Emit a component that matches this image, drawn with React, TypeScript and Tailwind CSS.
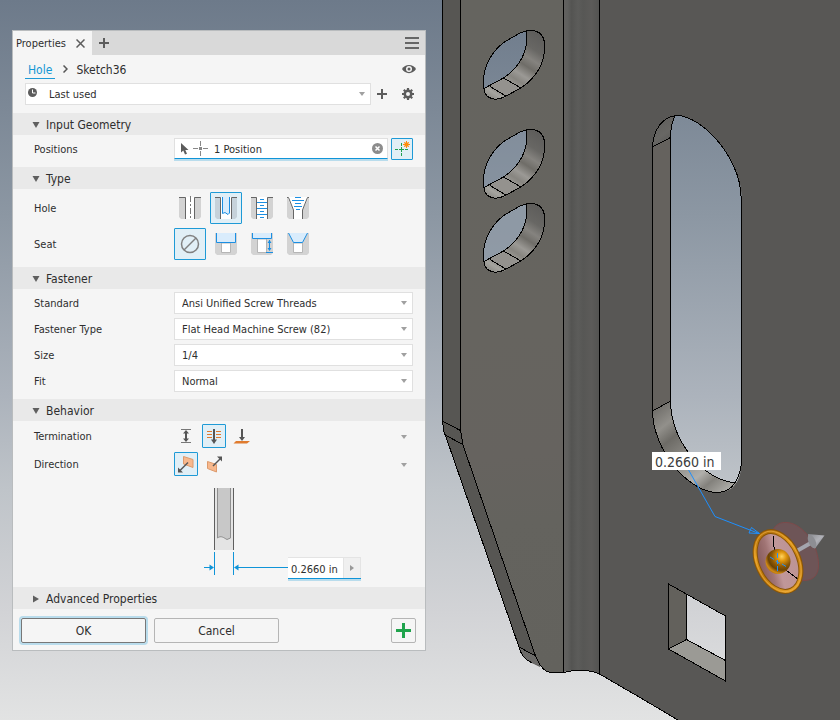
import { useState } from "react";
import type { ReactNode } from "react";

const holeSky = "M526.5 31C529 50 520 67 503.5 78L484 88.5L483.5 78C485 62 495 48 506 41L520 33Z";
const holeOutline =
  "M526.5 31C536 29 544.5 33 544.5 45V51C543 67 534 79 521 88L506 96C496 102 485 99 484 89L483.5 78C485 62 495 48 506 41L520 33Z";
const slotOutline =
  "M652.5 147C653 130 663 116 677 115.5C702 116 740 157 741 196L741.5 202V460C741 476 734 492.5 717 492.5C688 492 653 450 652.5 411Z";

const Scene = () => (
  <svg
    className="absolute inset-0 h-full w-full"
    viewBox="0 0 840 720"
    preserveAspectRatio="xMinYMin slice"
    fill="none"
    aria-label="Part model"
  >
    <defs>
      <linearGradient id="sky" gradientUnits="userSpaceOnUse" x1="0" y1="0" x2="0" y2="720">
        <stop offset="0" stopColor="#6d7a8a" />
        <stop offset="0.3" stopColor="#8c97a3" />
        <stop offset="0.55" stopColor="#acb3bc" />
        <stop offset="0.68" stopColor="#bfc4c9" />
        <stop offset="0.85" stopColor="#d2d3d6" />
        <stop offset="1" stopColor="#e2e3e3" />
      </linearGradient>
      <linearGradient id="face" gradientUnits="userSpaceOnUse" x1="460" y1="0" x2="520" y2="672">
        <stop offset="0" stopColor="#65645f" />
        <stop offset="0.5" stopColor="#66645f" />
        <stop offset="0.68" stopColor="#66635f" />
        <stop offset="0.78" stopColor="#64635e" />
        <stop offset="1" stopColor="#63625d" />
      </linearGradient>
      <linearGradient id="bend" x1="0" x2="1" y1="0" y2="0">
        <stop offset="0" stopColor="#636260" />
        <stop offset="0.12" stopColor="#5f5f5d" />
        <stop offset="0.22" stopColor="#545452" />
        <stop offset="0.4" stopColor="#5c5c5a" />
        <stop offset="0.55" stopColor="#575755" />
        <stop offset="0.78" stopColor="#5c5b59" />
        <stop offset="1" stopColor="#535351" />
      </linearGradient>
      <linearGradient id="bore" gradientUnits="userSpaceOnUse" x1="538" y1="34" x2="500" y2="92">
        <stop offset="0" stopColor="#5e5d5b" />
        <stop offset="0.22" stopColor="#686764" />
        <stop offset="0.36" stopColor="#85837f" />
        <stop offset="0.48" stopColor="#6f6d68" />
        <stop offset="0.62" stopColor="#9b9995" />
        <stop offset="0.72" stopColor="#878580" />
        <stop offset="0.82" stopColor="#9b9994" />
        <stop offset="1" stopColor="#94928e" />
      </linearGradient>
      <linearGradient id="boreEnd" gradientUnits="userSpaceOnUse" x1="498" y1="86" x2="490" y2="99">
        <stop offset="0" stopColor="#7a7974" />
        <stop offset="0.5" stopColor="#a6a5a0" />
        <stop offset="1" stopColor="#8a8984" />
      </linearGradient>
      <linearGradient id="slotFoot" gradientUnits="userSpaceOnUse" x1="655" y1="405" x2="725" y2="490">
        <stop offset="0" stopColor="#6b6965" />
        <stop offset="0.2" stopColor="#92908b" />
        <stop offset="0.33" stopColor="#6d6b66" />
        <stop offset="0.55" stopColor="#8f8d88" />
        <stop offset="0.75" stopColor="#b0afab" />
        <stop offset="0.86" stopColor="#83817c" />
        <stop offset="1" stopColor="#a9a8a3" />
      </linearGradient>
      <linearGradient id="slotHead" gradientUnits="userSpaceOnUse" x1="655" y1="120" x2="672" y2="142">
        <stop offset="0" stopColor="#5f5e5c" />
        <stop offset="0.6" stopColor="#686764" />
        <stop offset="1" stopColor="#5a5957" />
      </linearGradient>
      <radialGradient id="ball" cx="0.65" cy="0.3" r="0.8">
        <stop offset="0" stopColor="#ffd45e" />
        <stop offset="0.22" stopColor="#e0960f" />
        <stop offset="0.5" stopColor="#8c5806" />
        <stop offset="0.68" stopColor="#6b4305" />
        <stop offset="0.85" stopColor="#d18a14" />
        <stop offset="1" stopColor="#a4680a" />
      </radialGradient>
      <linearGradient id="cup" x1="0" x2="1" y1="0" y2="0.3">
        <stop offset="0" stopColor="#794f4f" />
        <stop offset="0.4" stopColor="#a07474" />
        <stop offset="0.6" stopColor="#c09799" />
        <stop offset="1" stopColor="#bd9495" />
      </linearGradient>
      <linearGradient id="ring" x1="0" x2="0" y1="0" y2="1">
        <stop offset="0" stopColor="#b8740c" />
        <stop offset="0.3" stopColor="#e39a1b" />
        <stop offset="0.6" stopColor="#c27b0c" />
        <stop offset="1" stopColor="#e09a24" />
      </linearGradient>
      <linearGradient id="cone" x1="0" x2="1" y1="0" y2="1">
        <stop offset="0" stopColor="#85868b" />
        <stop offset="0.5" stopColor="#b0b1b7" />
        <stop offset="1" stopColor="#797a7f" />
      </linearGradient>
    </defs>

    <rect width="840" height="720" fill="url(#sky)" />

    {/* bracket */}
    <path
      d="M442.5 0V421L444 432L446 437L519 647C521 656 526 660 532 663L540 667L560 600L480 0Z"
      fill="#575653"
    />
    <path d="M460.5 0V430L463 445L535.5 656L540 665C545 671 547 672.5 553 672.5H563.5V0Z" fill="url(#face)" />
    <path d="M563.5 0V672C575 669.5 589 669.5 599.5 674V0Z" fill="url(#bend)" />
    <path d="M599.5 0V674L640 697.5L678 720H840V0Z" fill="#585755" />
    <path d="M519 647L535.5 656L540 666L532 663C525 659 521 656 519 647Z" fill="#6b6a68" />
    <g stroke="#000" shapeRendering="crispEdges">
      <path d="M442.5 0V421L444 432L446 437L519 647C521 656 526 660 532 663" />
      <path d="M460.5 0V430L463 445L535.5 656L540 665C545 671 547 672.5 553 672.5H563.5C575 669.5 589 669.5 599.5 674L640 697.5L678 720" />
      <path d="M443 421.5L460.5 430.5M445 435L463 444.5M519 647L535.5 656M563.5 0V672M599.5 0V674" />
    </g>

    {/* round holes, the backdrop gets lighter further down */}
    {[0, 99, 173].map((dy) => (
      <g key={dy} transform={`translate(0 ${dy})`}>
        <path d={holeOutline} fill="url(#bore)" />
        <path d="M484 88L490 86L506 97C496 102 485 99 484 88Z" fill="url(#boreEnd)" />
        <path d="M503.5 78L521 88L506 96L490 86.5Z" fill="#94928e" />
        <path d={holeSky} fill="url(#sky)" />
        <path d={holeSky} fill="#939da9" fillOpacity={dy / 200} />
        <g stroke="#000" shapeRendering="crispEdges">
          <path d={holeOutline} />
          <path d="M526.5 31C529 50 520 67 503.5 78L484 88.5M503.5 78L521 88M490 86.5L506 96" />
        </g>
      </g>
    ))}

    {/* long slot */}
    <path d={slotOutline} fill="#65625e" />
    <path d="M652.5 147C653 130 663 116 677 115.5L671 130L670.5 137.5Z" fill="url(#slotHead)" />
    <path d="M652.5 411C653 450 688 492 717 492.5C727 492 733 489 736 483C702 480 671 440 670.5 401Z" fill="url(#slotFoot)" />
    <path
      d="M675 116C671 124 670.5 130 670.5 137V401C671 440 702 480 736 483C740 478 741 470 741.5 460V196C740 157 702 116 677 115.5Z"
      fill="url(#sky)"
    />
    <g stroke="#000" shapeRendering="crispEdges">
      <path d={slotOutline} />
      <path d="M675 116C671 124 670.5 130 670.5 137V401C671 440 702 480 736 483M652.5 147L670.5 137.5M652.5 411L670.5 401" />
    </g>

    {/* square cut-out */}
    <path d="M668.5 584L725.5 616V681L668.5 649Z" fill="#9b9a95" />
    <path d="M668.5 584L686.5 594V639.5L668.5 649Z" fill="#63615c" />
    <path d="M686.5 594L725.5 616V660.5L686.5 639.5Z" fill="url(#sky)" />
    <path
      d="M668.5 584L725.5 616V681L668.5 649ZM686.5 594V639.5L725.5 660.5M686.5 639.5L668.5 649"
      stroke="#000"
      shapeRendering="crispEdges"
    />

    {/* hole preview with its drag handle */}
    <path
      d="M773 530C776 524 781 522 787 522.5C797 523 806 532 812 541C817 550 819 560 818.5 567C818 575 813 581 803 580.5L790 588Z"
      fill="#745557"
      fillOpacity="0.8"
      stroke="#7d4a4a"
    />
    <path d="M795 552L816 540" stroke="#a4a5ad" strokeWidth="4" />
    <path d="M808 534L824.5 535.5L815 548.5C811 548 808 541 808 534Z" fill="url(#cone)" />
    <ellipse cx="812" cy="541.5" rx="3.5" ry="7" transform="rotate(-24 812 541.5)" fill="#8d8e93" />
    <g transform="rotate(-25 778 561.5)">
      <ellipse cx="778" cy="561.5" rx="19.5" ry="31" fill="url(#cup)" />
    </g>
    <path d="M773.5 536V546L775 550M786 570L799 580" stroke="#000" shapeRendering="crispEdges" />
    <g transform="rotate(-25 778 561.5)">
      <ellipse cx="778" cy="561.5" rx="20.5" ry="31.5" stroke="#8a5506" strokeWidth="5" />
      <ellipse cx="778" cy="561.5" rx="20.5" ry="31.5" stroke="url(#ring)" strokeWidth="3" />
      <ellipse cx="778" cy="561.5" rx="20.8" ry="31.8" stroke="#f0b44a" strokeOpacity="0.6" />
    </g>
    <circle cx="778" cy="561.5" r="12.5" fill="url(#ball)" />
    <path
      d="M777.5 553V558M777.5 560V564M777.5 566V571M770 557L774 559.5M776 561L780 563.5M782 564L786 566.5"
      stroke="#1e90ff"
    />

    {/* diameter leader */}
    <g stroke="#1e90ff">
      <path d="M688 469L715 516.5L759 533.5" />
      <path d="M751.5 527.5L759.5 533.5L749 533M751.5 527.5L749 533" />
    </g>
    <rect x="652" y="452" width="69" height="18" fill="#fff" />
    <text x="655" y="467" className="text-[14px]" fill="#3c3c3c">
      0.2660 in
    </text>
  </svg>
);

const Triangle = ({ open = true }: { open?: boolean }) => (
  <svg width="8" height="8" viewBox="0 0 8 8" fill="#5f5f5f" aria-hidden="true">
    {open ? <path d="M0.5 1H7.5L4 7Z" /> : <path d="M1 0.5V7.5L7 4Z" />}
  </svg>
);

const Caret = () => (
  <svg width="6" height="4" viewBox="0 0 6 4" fill="#a0a0a0" aria-hidden="true">
    <path d="M0 0H6L3 4Z" />
  </svg>
);

const SectionHeader = ({ title, open = true }: { title: string; open?: boolean }) => (
  <h2>
    <button
      type="button"
      aria-expanded={open}
      className="flex h-[22px] w-full items-center gap-1.5 bg-[#e9e9e9] pt-0.5 pl-[19px] text-[12px]"
    >
      <Triangle open={open} />
      {title}
    </button>
  </h2>
);

const SelectRow = ({ id, label, options }: { id: string; label: string; options: string[] }) => (
  <div className="flex items-center pr-3 pl-[21px]">
    <label htmlFor={id} className="w-[140px] shrink-0 pt-0.5">
      {label}
    </label>
    <div className="relative flex-1">
      <select
        id={id}
        className="block h-[22px] w-full appearance-none border border-[#e0e0e0] bg-white pt-0.5 pr-5 pl-[7px] outline-none"
      >
        {options.map((option) => (
          <option key={option}>{option}</option>
        ))}
      </select>
      <span className="pointer-events-none absolute inset-y-0 right-1.5 flex items-center">
        <Caret />
      </span>
    </div>
  </div>
);

type Choice = { name: string; icon: ReactNode };

const gray = "#d3d3d3";
const dark = "#666";
const blue = "#1b8fe3";
const pale = "#d9ecfc";

const holeTypes: Choice[] = [
  {
    name: "Simple hole",
    icon: (
      <>
        <path d="M0 0H7V22H2L0 20ZM15 0H22V20L20 22H15Z" fill={gray} />
        <path d="M7 0H15V22H7Z" fill="#fff" />
        <path d="M0 0.5H6.5V22M22 0.5H15.5V22" stroke={dark} />
        <path d="M11.5 -1V23" stroke="#777" strokeDasharray="6 2 2 2" />
      </>
    ),
  },
  {
    name: "Clearance hole",
    icon: (
      <>
        <path d="M0 0H6V22H2L0 20ZM17 0H22V20L20 22H17Z" fill="#c6d2da" />
        <path d="M6 0H17V22H6Z" fill="#fff" />
        <path d="M7.5 0V16.5L10 15.5L13 17.5L14.5 16V0Z" fill={pale} />
        <path d="M7.5 0V16.5L10 15.5L13 17.5L14.5 16V0" stroke={blue} />
        <path d="M0 0.5H5.5V22M22 0.5H16.5V22" stroke={dark} />
      </>
    ),
  },
  {
    name: "Tapped hole",
    icon: (
      <>
        <path d="M0 0H6V22H2L0 20ZM16 0H22V20L20 22H16Z" fill={gray} />
        <path d="M6 0H16V22H6Z" fill="#fff" />
        <path d="M0 0.5H5.5V22M22 0.5H16.5V22" stroke={dark} />
        <path d="M9 2.5H13M6 5.5H16M9 8.5H13M6 11.5H16M9 14.5H13M6 17.5H16M9 20.5H13" stroke={blue} />
      </>
    ),
  },
  {
    name: "Taper tapped hole",
    icon: (
      <>
        <path d="M0 0L6.5 13V22H2L0 20ZM22 0L15.5 13V22H20L22 20Z" fill={gray} />
        <path d="M2 0H20L15.5 13V22H6.5V13Z" fill="#fff" />
        <path d="M0 0.5H1.5L6.5 13V22M22 0.5H20.5L15.5 13V22" stroke={dark} />
        <path d="M8 0.5H14M5 3.5H17M8 6.5H14M7 9.5H15M9 12.5H13" stroke={blue} />
      </>
    ),
  },
];

const seatTypes: Choice[] = [
  {
    name: "No seat",
    icon: (
      <g stroke="#808080" strokeWidth="1.5">
        <circle cx="11" cy="11" r="8.5" />
        <path d="M5 17L17 5" />
      </g>
    ),
  },
  {
    name: "Counterbore",
    icon: (
      <>
        <path d="M0 0H22V20L20 22H2L0 20Z" fill={gray} />
        <path d="M6.5 10V19.5H15.5V10Z" fill="#fff" stroke="#b5b5b5" />
        <path d="M1.5 0V9.5H20.5V0Z" fill={pale} />
        <path d="M1.5 0V9.5H20.5V0" stroke={blue} />
      </>
    ),
  },
  {
    name: "Spotface",
    icon: (
      <>
        <path d="M0 0H22V20L20 22H2L0 20Z" fill={gray} />
        <path d="M6.5 6V19.5H15.5V6Z" fill="#fff" stroke="#b5b5b5" />
        <path d="M1.5 0V5.5H20.5V0Z" fill={pale} />
        <path d="M1.5 0V5.5H20.5V0M18.5 7V17M15 19.5H22" stroke={blue} />
        <path d="M16.500 10L18.5 7L20.500 10ZM16.500 15L18.5 18L20.500 15Z" fill={blue} />
      </>
    ),
  },
  {
    name: "Countersink",
    icon: (
      <>
        <path d="M0 0H22V20L20 22H2L0 20Z" fill={gray} />
        <path d="M6.5 10V19.5H15.5V10Z" fill="#fff" stroke="#b5b5b5" />
        <path d="M1.5 0L6.5 9.5H15.5L20.5 0Z" fill={pale} />
        <path d="M1.5 0L6.5 9.5H15.5L20.5 0" stroke={blue} />
      </>
    ),
  },
];

const terminations: Choice[] = [
  {
    name: "Distance",
    icon: (
      <>
        <path d="M6 4.5H16M6 17.5H16" stroke="#777" />
        <path d="M11 7V15" stroke="#555" strokeWidth="2" />
        <path d="M8 8.5L11 5L14 8.5ZM8 13.5L11 17L14 13.5Z" fill="#555" />
      </>
    ),
  },
  {
    name: "Through all",
    icon: (
      <>
        <path d="M4 6.5H9M4 9.5H9M4 12.5H9M13 6.5H18M13 9.5H18M13 12.5H18" stroke="#e07b2e" />
        <path d="M11 4V15" stroke="#555" strokeWidth="2" />
        <path d="M8 14.5H14L11 19Z" fill="#555" />
      </>
    ),
  },
  {
    name: "To",
    icon: (
      <>
        <path d="M5 16H19L16 18.5H2.5Z" fill="#e07b2e" />
        <path d="M11 4V13" stroke="#555" strokeWidth="2" />
        <path d="M8 12H14L11 16Z" fill="#555" />
      </>
    ),
  },
];

const directions: Choice[] = [
  {
    name: "Default direction",
    icon: (
      <>
        <path d="M8.5 3.5L18 6.5V14.5L8.5 11Z" fill="#f7b88d" stroke="#dd9a6c" />
        <path d="M5 17.5L13 9.5" stroke="#555" strokeWidth="1.5" />
        <path d="M3 19.5V14.5L8 19.5Z" fill="#555" />
      </>
    ),
  },
  {
    name: "Flipped direction",
    icon: (
      <>
        <path d="M4.5 8.5L13.5 11.5V19L4.5 15.5Z" fill="#f7b88d" stroke="#dd9a6c" />
        <path d="M10 13L17 6" stroke="#555" strokeWidth="1.5" />
        <path d="M19 3.5V8.5L14 3.5Z" fill="#555" />
      </>
    ),
  },
];

const ChoiceButtons = ({
  choices,
  initial,
  large = false,
}: {
  choices: Choice[];
  initial: number;
  large?: boolean;
}) => {
  const [active, setActive] = useState(initial);
  return (
    <div className="flex gap-1">
      {choices.map((choice, index) => (
        <button
          key={choice.name}
          type="button"
          aria-label={choice.name}
          aria-pressed={index === active}
          onClick={() => setActive(index)}
          className={`flex items-center justify-center rounded-[1px] border ${
            large ? "size-8" : "size-6"
          } ${index === active ? "border-[#1e9ad6] bg-[#e1eff6]" : "border-transparent"}`}
        >
          <svg className="shrink-0 overflow-visible" width="22" height="22" viewBox="0 0 22 22" fill="none">
            {choice.icon}
          </svg>
        </button>
      ))}
    </div>
  );
};

const ChoiceRow = ({ label, children }: { label: string; children: ReactNode }) => (
  <div className="flex items-center pr-3 pl-[21px]">
    <span className="w-[140px] shrink-0 pt-0.5">{label}</span>
    {children}
  </div>
);

const MoreButton = ({ label }: { label: string }) => (
  <button type="button" aria-label={label} className="ml-auto flex h-5 items-center px-1.5 pt-0.5">
    <Caret />
  </button>
);

const Plus = () => (
  <svg width="10" height="10" viewBox="0 0 10 10" stroke="#5c5c5c" strokeWidth="2">
    <path d="M5 0V10M0 5H10" />
  </svg>
);

const HolePreview = () => (
  <div className="flex items-end pt-3 pb-[6px] pl-[191px]">
    <svg width="84" height="93" viewBox="0 0 84 93" fill="none" className="shrink-0" aria-label="Hole diameter">
      <path d="M10 0H30V62H10Z" fill="#e4e4e4" />
      <path d="M13.5 0V50C17 47 20 50 23 51.500L26.500 50V0Z" fill="#c8c8c8" />
      <path d="M13.5 0V50C17 47 20 50 23 51.500L26.500 50V0" stroke="#8e8e8e" />
      <path d="M10.5 0V62M29.5 0V62" stroke="#5f5f5f" />
      <path d="M10.5 64V87M29.5 64V87M0 79.5H9M31 79.5H84" stroke="#0f94d8" />
      <path d="M5.5 76.500V82.500L10 79.500ZM34.500 76.500V82.500L30 79.500Z" fill="#0f94d8" />
    </svg>
    <div className="flex h-[24px] w-[73px] border-b-2 border-b-[#b9dcec]">
      <div className="flex w-full border-b border-b-[#0f94d8]">
        <input
          aria-label="Diameter"
          defaultValue="0.2660 in"
          className="w-[55px] border-t border-[#e4e4e4] bg-white pt-[3px] pl-[3px] outline-none"
        />
        <button
          type="button"
          aria-label="Diameter options"
          className="flex flex-1 items-center justify-center border border-b-0 border-[#e4e4e4] bg-[#f0f0f0]"
        >
          <svg width="4" height="6" viewBox="0 0 4 6" fill="#999">
            <path d="M0 0V6L4 3Z" />
          </svg>
        </button>
      </div>
    </div>
  </div>
);

const PropertiesPanel = () => (
  <section className="relative w-full max-w-[414px] border border-[#b9bcbe] bg-[#f5f5f5] text-[11px] leading-4 text-[#2e2e2e]">
    <div className="flex h-6 items-stretch bg-[#d9d9d9]">
      <div className="flex items-center gap-2.5 bg-[#f5f5f5] pr-[7px] pl-[3px]">
        <span className="pt-px">Properties</span>
        <button type="button" aria-label="Close tab">
          <svg width="9" height="9" viewBox="0 0 9 9" stroke="#5c5c5c" strokeWidth="1.5">
            <path d="M0.5 0.5L8.5 8.5M8.5 0.5L0.5 8.5" />
          </svg>
        </button>
      </div>
      <button type="button" aria-label="New tab" className="px-[7px]">
        <Plus />
      </button>
      <button type="button" aria-label="Panel menu" className="ml-auto pr-1.5">
        <svg width="14" height="12" viewBox="0 0 14 12" fill="#666">
          <path d="M0 0H14V2H0ZM0 5H14V7H0ZM0 10H14V12H0Z" />
        </svg>
      </button>
    </div>

    <nav className="flex h-7 items-center pr-[9px] pl-3 text-[12px]">
      <a href="#hole" className="border-b border-[#1e9ad6] px-[3px] pt-0.5 text-[#1496d4]">
        Hole
      </a>
      <svg className="mx-2" width="5" height="8" viewBox="0 0 5 8" fill="none" stroke="#555" strokeWidth="1.5">
        <path d="M0.5 0.5L4 4L0.5 7.5" />
      </svg>
      <span className="pt-px">Sketch36</span>
      <button type="button" aria-label="Toggle preview" className="ml-auto">
        <svg width="14" height="10" viewBox="0 0 14 10">
          <path d="M0 5C3 -0.5 11 -0.5 14 5C11 10.5 3 10.5 0 5Z" fill="#5c5c5c" />
          <circle cx="7" cy="5" r="3" fill="#f5f5f5" />
          <circle cx="7" cy="5" r="1.5" fill="#5c5c5c" />
        </svg>
      </button>
    </nav>

    <div className="flex items-center pr-[11px] pl-3">
      <div className="relative flex-1">
        <span className="pointer-events-none absolute inset-y-0 left-[3px] flex items-center pb-1">
          <svg width="9" height="9" viewBox="0 0 9 9">
            <circle cx="4.5" cy="4.5" r="4.5" fill="#5c5c5c" />
            <path d="M4.5 1.5V5H7.5" stroke="#fff" fill="none" />
          </svg>
        </span>
        <select
          aria-label="Preset"
          className="block h-[22px] w-full appearance-none border border-[#e0e0e0] bg-white pt-0.5 pr-5 pl-[23px] outline-none"
        >
          <option>Last used</option>
          <option>No preset</option>
        </select>
        <span className="pointer-events-none absolute inset-y-0 right-1.5 flex items-center">
          <Caret />
        </span>
      </div>
      <button type="button" aria-label="Save preset" className="ml-1.5">
        <Plus />
      </button>
      <button type="button" aria-label="Preset settings" className="ml-[15px]">
        <svg width="12" height="12" viewBox="0 0 12 12" fill="none" stroke="#5c5c5c">
          <circle cx="6" cy="6" r="3.25" strokeWidth="2.5" />
          <path
            d="M6 0V2M6 10V12M0 6H2M10 6H12M1.8 1.8L3.2 3.2M8.8 8.8L10.2 10.2M1.8 10.2L3.2 8.8M8.8 3.2L10.2 1.8"
            strokeWidth="2.2"
          />
        </svg>
      </button>
    </div>

    <div className="pt-2">
      <SectionHeader title="Input Geometry" />
      <div className="flex items-center pt-[3px] pr-3 pb-[6px] pl-[21px]">
        <label htmlFor="positions" className="w-[140px] shrink-0">
          Positions
        </label>
        <div className="flex h-[23px] flex-1 border-b-2 border-[#b9dcec]">
          <div className="flex flex-1 items-center gap-1 border border-b-[#0f94d8] border-x-[#e0e0e0] border-t-[#e0e0e0] bg-white pr-1 pl-1.5">
            <svg width="8" height="12" viewBox="0 0 8 12" fill="#5c5c5c" aria-hidden="true">
              <path d="M0 0V9.5L2.3 7.5L4 11.5L6 10.7L4.3 7H7.5Z" />
            </svg>
            <svg width="15" height="15" viewBox="0 0 15 15" fill="#888" aria-hidden="true">
              <path d="M7 0H8V5H7ZM7 10H8V15H7ZM0 7H5V8H0ZM10 7H15V8H10ZM6 6H9V9H6Z" />
            </svg>
            <input
              id="positions"
              defaultValue="1 Position"
              className="w-0 flex-1 bg-transparent pt-0.5 pl-0.5 outline-none"
            />
            <button type="button" aria-label="Clear positions">
              <svg width="11" height="11" viewBox="0 0 11 11">
                <circle cx="5.5" cy="5.5" r="5.5" fill="#8c8c8c" />
                <path d="M3.5 3.5L7.5 7.5M7.5 3.5L3.5 7.5" stroke="#fff" strokeWidth="1.5" />
              </svg>
            </button>
          </div>
        </div>
        <button
          type="button"
          aria-label="Create sketch points"
          className="ml-[3px] flex size-[22px] items-center justify-center self-start rounded-[1px] border border-[#1e9ad6] bg-[#e1eff6]"
        >
          <svg width="16" height="16" viewBox="0 0 16 16" fill="none" className="shrink-0">
            <path d="M7.5 2V15M1 8.5H14" stroke="#22a04f" strokeDasharray="3 1 5 1 3" />
            <circle cx="12.5" cy="3.5" r="2.2" fill="#ff8c0a" />
            <path d="M12.5 0V7M9 3.5H16M10.2 1.2L14.8 5.8M14.8 1.2L10.2 5.8" stroke="#ff8c0a" />
          </svg>
        </button>
      </div>
    </div>

    <SectionHeader title="Type" />
    <div className="flex flex-col gap-1 pt-[3px] pb-[7px]">
      <ChoiceRow label="Hole">
        <ChoiceButtons choices={holeTypes} initial={1} large />
      </ChoiceRow>
      <ChoiceRow label="Seat">
        <ChoiceButtons choices={seatTypes} initial={0} large />
      </ChoiceRow>
    </div>

    <SectionHeader title="Fastener" />
    <div className="flex flex-col gap-1 pt-[3px] pb-[7px]">
      <SelectRow id="standard" label="Standard" options={["Ansi Unified Screw Threads", "ISO Metric Profile"]} />
      <SelectRow
        id="fastener-type"
        label="Fastener Type"
        options={["Flat Head Machine Screw (82)", "Socket Head Cap Screw"]}
      />
      <SelectRow id="size" label="Size" options={["1/4", "5/16", "3/8"]} />
      <SelectRow id="fit" label="Fit" options={["Normal", "Close", "Loose"]} />
    </div>

    <SectionHeader title="Behavior" />
    <div className="flex flex-col gap-1 pt-[3px]">
      <ChoiceRow label="Termination">
        <ChoiceButtons choices={terminations} initial={1} />
        <MoreButton label="Termination options" />
      </ChoiceRow>
      <ChoiceRow label="Direction">
        <ChoiceButtons choices={directions} initial={0} />
        <MoreButton label="Direction options" />
      </ChoiceRow>
    </div>
    <HolePreview />

    <SectionHeader title="Advanced Properties" open={false} />
    <div className="flex gap-2 pt-[9px] pr-[9px] pb-[7px] pl-2 text-[12px]">
      <button
        type="button"
        className="h-[25px] w-[125px] rounded-[2px] border border-[#777] ring-2 ring-[#b9dcec]"
      >
        OK
      </button>
      <button type="button" className="h-[25px] w-[125px] rounded-[2px] border border-[#b5b5b5]">
        Cancel
      </button>
      <button
        type="button"
        aria-label="Apply and create new hole"
        className="ml-auto flex size-[25px] items-center justify-center rounded-[2px] border border-[#b5b5b5]"
      >
        <svg width="15" height="15" viewBox="0 0 15 15" stroke="#1fa34c" strokeWidth="3" className="shrink-0">
          <path d="M7.5 0V15M0 7.5H15" />
        </svg>
      </button>
    </div>
  </section>
);

const App = () => (
  <main className="relative min-h-screen overflow-hidden bg-[#e2e3e3] px-3 pt-[30px] pb-8 font-['DejaVu_Sans_Condensed','DejaVu_Sans',sans-serif]">
    <Scene />
    <PropertiesPanel />
  </main>
);

export default App;
